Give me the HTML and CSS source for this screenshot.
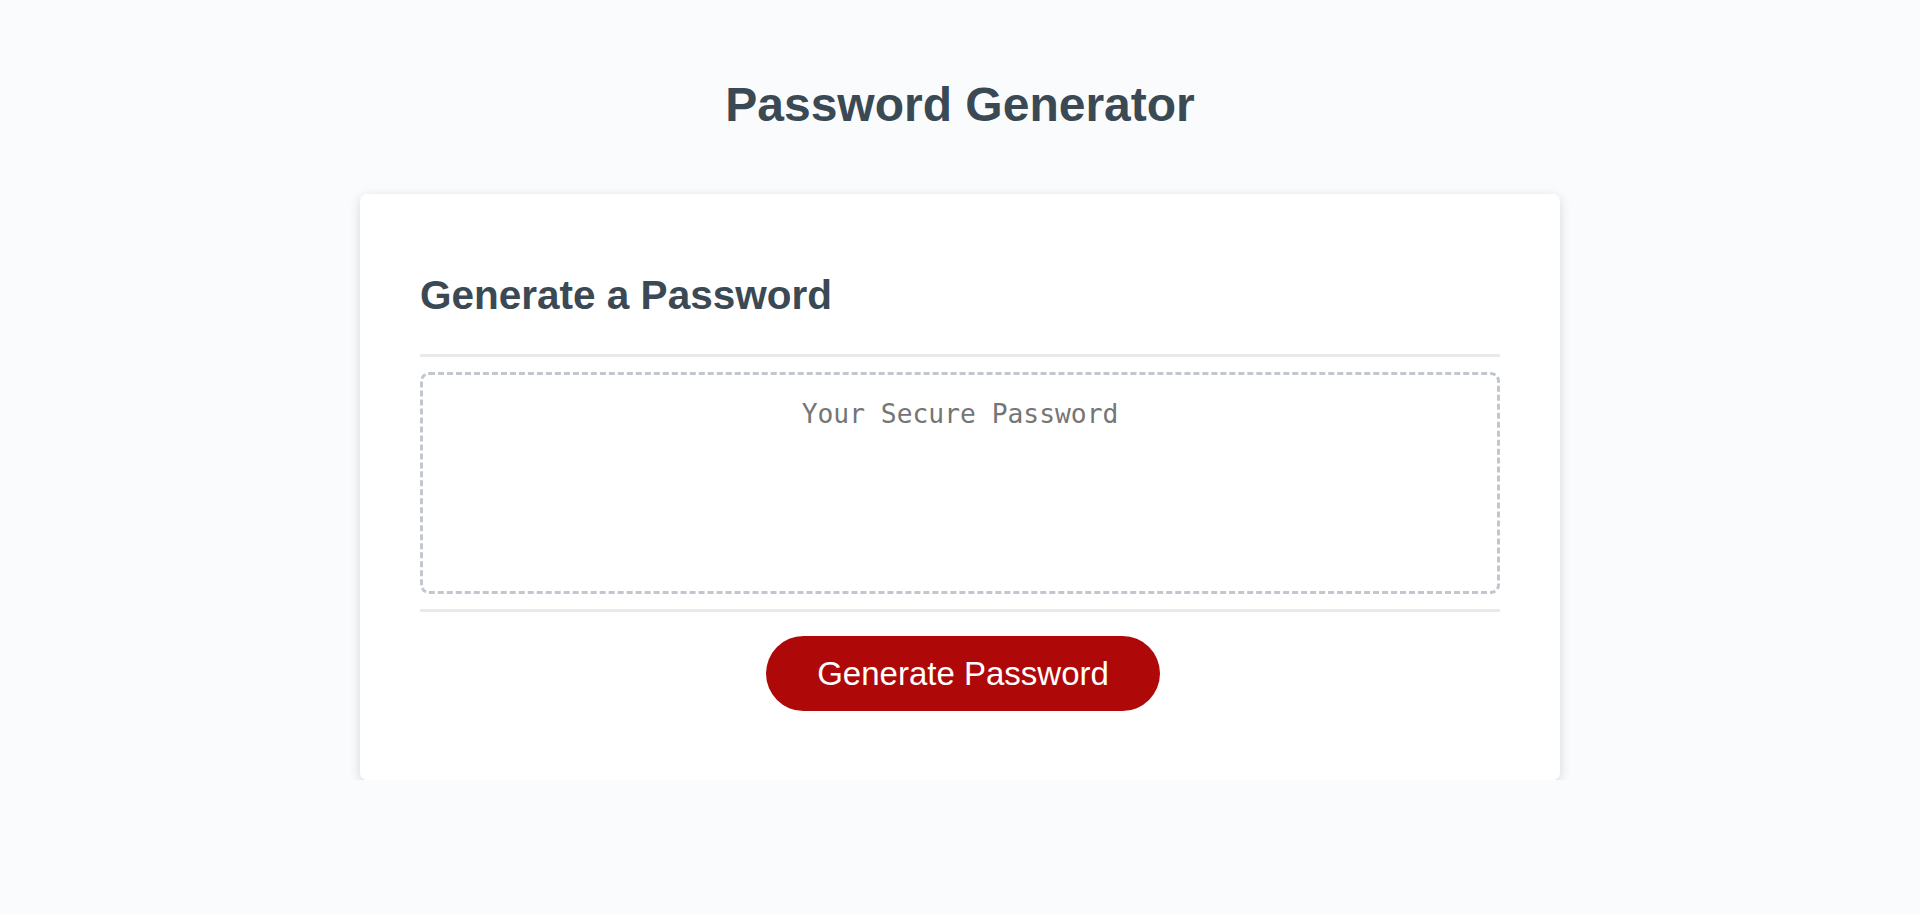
FILE: index.html
```html
<!DOCTYPE html>
<html lang="en">
<head>
<meta charset="UTF-8">
<title>Password Generator</title>
<link rel="stylesheet" href="styles.css">
</head>
<body>
<div class="wrapper">
  <header>
    <h1>Password Generator</h1>
  </header>
  <div class="card">
    <div class="card-header">
      <h2>Generate a Password</h2>
    </div>
    <div class="card-body">
      <textarea readonly id="password" placeholder="Your Secure Password" aria-label="Generated Password"></textarea>
    </div>
    <div class="card-footer">
      <button id="generate" class="btn">Generate Password</button>
    </div>
  </div>
</div>
</body>
</html>
```

FILE: styles.css
```css
* {
  box-sizing: border-box;
}

html,
body {
  margin: 0;
  padding: 0;
}

body {
  background-color: #f9fbfd;
  font-family: "Liberation Sans", Arial, sans-serif;
  color: #3b4954;
}

.wrapper {
  padding: 47px 30px 0;
}

h1 {
  margin: 0 0 32px;
  padding: 30px 0;
  font-size: 48px;
  line-height: 55px;
  font-weight: 700;
  text-align: center;
  color: #3b4954;
}

.card {
  max-width: 1200px;
  margin: 0 auto;
  padding: 45px 60px;
  background-color: #ffffff;
  border-radius: 7px;
  box-shadow: rgba(0, 0, 0, 0.15) 0 3px 12px 0;
  color: #3b4954;
  font-size: 27px;
}

.card-header h2 {
  margin: 33px 0 36px;
  font-size: 40.5px;
  line-height: 46px;
  font-weight: 700;
}

.card-header::after,
.card-footer::before {
  content: "";
  display: block;
  width: 100%;
  height: 3px;
  background: #e7e9eb;
}

.card-body {
  display: flex;
  flex-direction: column;
}

#password {
  appearance: none;
  -webkit-appearance: none;
  display: block;
  width: 100%;
  height: 222px;
  margin: 15px 0;
  padding: 22.5px 22.5px 127px;
  border: 3px dashed #c0c7cf;
  border-radius: 9px;
  resize: none;
  overflow: hidden;
  outline: none;
  background: #ffffff;
  font-family: "DejaVu Sans Mono", "Liberation Mono", monospace;
  font-size: 26.3px;
  line-height: 33.5px;
  text-align: center;
  color: #757575;
}

#password::placeholder {
  color: #757575;
  opacity: 1;
}

.card-footer {
  display: flex;
  flex-direction: column;
  align-items: center;
}

.card-footer::before {
  align-self: stretch;
}

.btn {
  border: none;
  margin: 24px 24px 24px 30px;
  padding: 21px 51px;
  border-radius: 37.5px;
  background-color: #af0808;
  color: #ffffff;
  font-family: "Liberation Sans", Arial, sans-serif;
  font-size: 33px;
  line-height: 33px;
  text-align: center;
  cursor: pointer;
}
```
